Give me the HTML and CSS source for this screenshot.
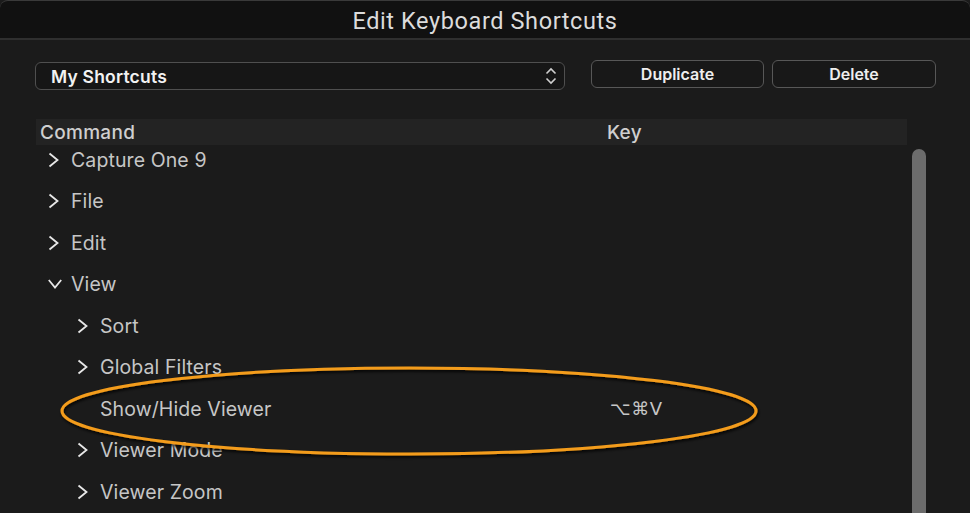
FILE: index.html
```html
<!DOCTYPE html>
<html>
<head>
<meta charset="utf-8">
<link rel="stylesheet" href="styles.css">
</head>
<body>
<div class="window">
  <header class="titlebar">Edit Keyboard Shortcuts</header>
  <div class="content">
    <div class="toolbar">
      <div class="select">
        <span class="select-label">My Shortcuts</span>
        <svg class="updown" width="12" height="18" viewBox="0 0 12 18"><polyline points="1.5,6.5 6,2 10.5,6.5" fill="none" stroke="#cfcfcf" stroke-width="1.6"/><polyline points="1.5,11.5 6,16 10.5,11.5" fill="none" stroke="#cfcfcf" stroke-width="1.6"/></svg>
      </div>
      <button class="btn btn-dup">Duplicate</button>
      <button class="btn btn-del">Delete</button>
    </div>
    <div class="table-area">
      <div class="table">
        <div class="thead">
          <span class="col-cmd">Command</span>
          <span class="col-key">Key</span>
        </div>
        <div class="tbody">
          <div class="rows">
            <div class="row lvl1"><svg class="chev" viewBox="0 0 12 16"><polyline points="1.5,1.5 9.5,8 1.5,14.5"/></svg><span class="name">Capture One 9</span></div>
            <div class="row lvl1"><svg class="chev" viewBox="0 0 12 16"><polyline points="1.5,1.5 9.5,8 1.5,14.5"/></svg><span class="name">File</span></div>
            <div class="row lvl1"><svg class="chev" viewBox="0 0 12 16"><polyline points="1.5,1.5 9.5,8 1.5,14.5"/></svg><span class="name">Edit</span></div>
            <div class="row lvl1"><svg class="chev down" viewBox="0 0 14 16"><polyline points="0.8,4 7,11.5 13.2,4"/></svg><span class="name">View</span></div>
            <div class="row lvl2"><svg class="chev" viewBox="0 0 12 16"><polyline points="1.5,1.5 9.5,8 1.5,14.5"/></svg><span class="name">Sort</span></div>
            <div class="row lvl2"><svg class="chev" viewBox="0 0 12 16"><polyline points="1.5,1.5 9.5,8 1.5,14.5"/></svg><span class="name">Global Filters</span></div>
            <div class="row lvl2 leaf"><span class="chev-space"></span><span class="name">Show/Hide Viewer</span><span class="key">⌥⌘V</span></div>
            <div class="row lvl2"><svg class="chev" viewBox="0 0 12 16"><polyline points="1.5,1.5 9.5,8 1.5,14.5"/></svg><span class="name">Viewer Mode</span></div>
            <div class="row lvl2"><svg class="chev" viewBox="0 0 12 16"><polyline points="1.5,1.5 9.5,8 1.5,14.5"/></svg><span class="name">Viewer Zoom</span></div>
          </div>
        </div>
      </div>
      <div class="scrollbar"><div class="thumb"></div></div>
    </div>
  </div>
  <svg class="highlight" width="970" height="513" viewBox="0 0 970 513">
    <defs>
      <filter id="sh" x="-10%" y="-30%" width="120%" height="160%">
        <feDropShadow dx="1" dy="2" stdDeviation="1.5" flood-color="#000" flood-opacity="0.9"/>
      </filter>
    </defs>
    <ellipse cx="409" cy="411" rx="347" ry="43" fill="none" stroke="#f39c1b" stroke-width="3" filter="url(#sh)"/>
  </svg>
</div>
</body>
</html>
```
FILE: styles.css
```css
* { box-sizing: border-box; }
html, body {
  margin: 0;
  padding: 0;
  width: 970px;
  height: 513px;
  overflow: hidden;
  background: #1b1b1b;
  font-family: "Inter", "Liberation Sans", Arial, sans-serif;
}
.window {
  position: relative;
  width: 970px;
  height: 513px;
  display: flex;
  flex-direction: column;
  background: #1b1b1b;
}
.titlebar {
  height: 40px;
  flex: none;
  background: #111111;
  border-top: 1px solid #3a3a3a;
  border-bottom: 2px solid #2f2f2f;
  border-radius: 8px 8px 0 0;
  color: #dcdcdc;
  font-family: "Roboto", "Liberation Sans", sans-serif;
  font-size: 23.5px;
  letter-spacing: 0.6px;
  display: flex;
  align-items: center;
  justify-content: center;
  padding-top: 2px;
}
.content {
  flex: 1;
  display: flex;
  flex-direction: column;
  padding: 20px 0 0 35px;
}
.toolbar {
  display: flex;
  align-items: flex-start;
  height: 30px;
}
.select {
  width: 530px;
  height: 28px;
  margin-top: 2px;
  border: 1.5px solid #4f4f4f;
  border-radius: 6px;
  display: flex;
  align-items: center;
  justify-content: space-between;
  padding: 0 7px 0 15px;
  background: #161616;
}
.select-label {
  color: #f2f2f2;
  font-size: 17.5px;
  font-weight: 600;
  letter-spacing: 0.2px;
}
.updown { display: block; }
.btn {
  height: 28px;
  border: 1.5px solid #575757;
  border-radius: 6px;
  background: #181818;
  color: #eeeeee;
  font-family: "Inter", "Liberation Sans", sans-serif;
  font-size: 16px;
  font-weight: 600;
  padding: 0;
}
.btn-dup { width: 173px; margin-left: 26px; }
.btn-del { width: 164px; margin-left: 8px; }
.table-area {
  display: flex;
  margin-top: 29px;
  flex: 1;
  min-height: 0;
}
.table {
  width: 871px;
  display: flex;
  flex-direction: column;
  margin-left: 1px;
}
.thead {
  height: 26px;
  flex: none;
  background: #232323;
  display: flex;
  align-items: center;
  color: #cfcfcf;
  font-size: 19px;
  font-weight: 500;
  letter-spacing: 0.3px;
}
.col-cmd { width: 571px; padding-left: 4px; }
.tbody {
  flex: 1;
  overflow: hidden;
}
.rows { margin-top: -6px; }
.row {
  height: 41.5px;
  display: flex;
  align-items: center;
  color: #c6c6c6;
  font-size: 19.5px;
  letter-spacing: 0.1px;
}
.row.lvl1 { padding-left: 12px; }
.row.lvl2 { padding-left: 41px; }
.chev {
  width: 12px;
  height: 16px;
  fill: none;
  stroke: #e8e8e8;
  stroke-width: 1.8;
  margin-right: 11px;
  flex: none;
}
.chev.down { width: 14px; margin-right: 9px; }
.chev-space { width: 23px; flex: none; }
.name { flex: none; }
.leaf .name { width: 510px; }
.key { color: #c6c6c6; font-family: "DejaVu Sans", sans-serif; font-size: 18px; letter-spacing: 0.5px; }
.scrollbar {
  width: 14px;
  margin-left: 5px;
  padding-top: 30px;
}
.thumb {
  height: 100%;
  background: #6c6c6c;
  border-radius: 7px 7px 0 0;
}
.highlight {
  position: absolute;
  left: 0;
  top: 0;
  pointer-events: none;
}
```
